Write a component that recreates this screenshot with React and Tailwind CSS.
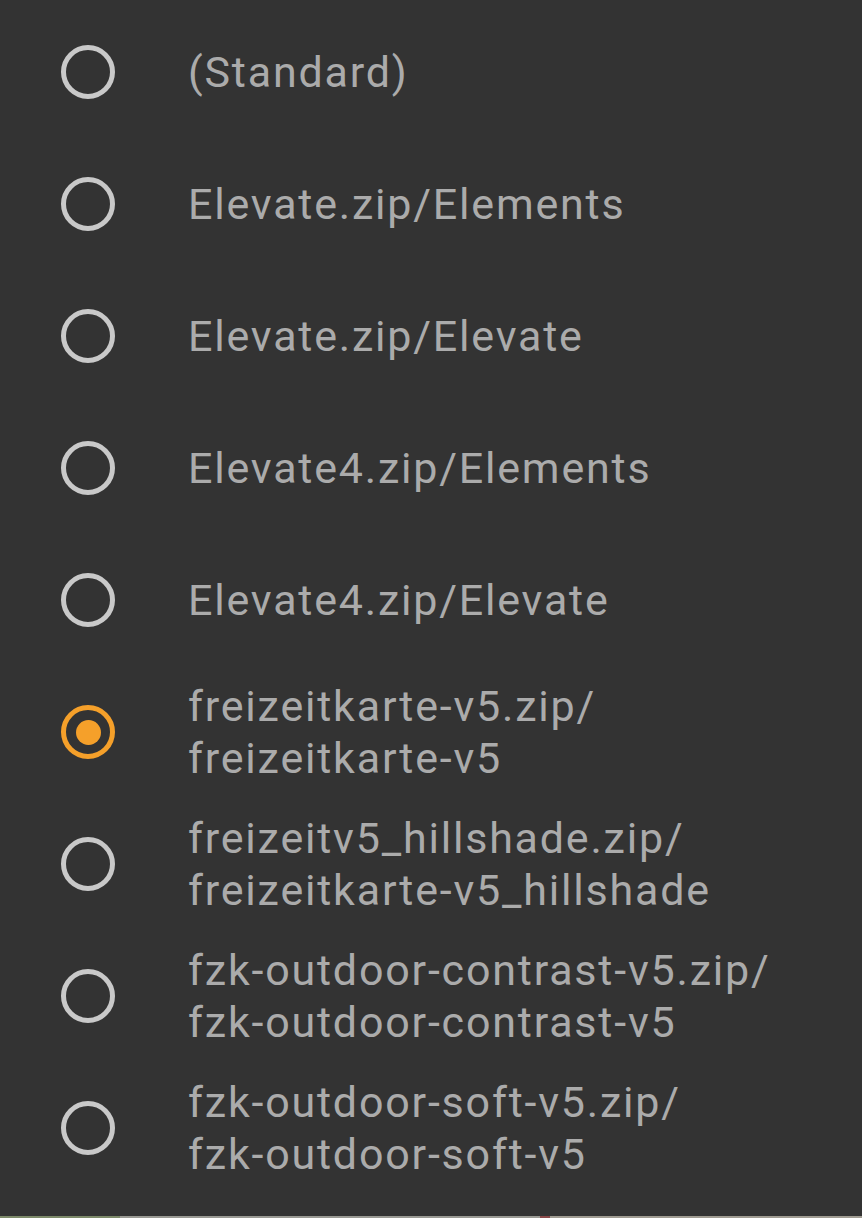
import React from "react";

// Map theme options shown in the picker
const options = [
  ["(Standard)"],
  ["Elevate.zip/Elements"],
  ["Elevate.zip/Elevate"],
  ["Elevate4.zip/Elements"],
  ["Elevate4.zip/Elevate"],
  ["freizeitkarte-v5.zip/", "freizeitkarte-v5"],
  ["freizeitv5_hillshade.zip/", "freizeitkarte-v5_hillshade"],
  ["fzk-outdoor-contrast-v5.zip/", "fzk-outdoor-contrast-v5"],
  ["fzk-outdoor-soft-v5.zip/", "fzk-outdoor-soft-v5"],
];

const selected = 5;

const Radio = ({ checked }) => {
  if (checked) {
    return (
      <div className="flex h-[54px] w-[54px] shrink-0 items-center justify-center rounded-full border-[5px] border-[#f5a02a]">
        <div className="h-[25px] w-[25px] rounded-full bg-[#f5a02a]" />
      </div>
    );
  }
  return <div className="h-[54px] w-[54px] shrink-0 rounded-full border-[5px] border-[#c9c9c9]" />;
};

export default function App() {
  return (
    <div className="flex h-[1218px] w-[862px] flex-col bg-[#333333] font-['Roboto','Liberation_Sans',sans-serif]">
      <div className="flex flex-1 flex-col pt-[6px]">
        {options.map((lines, i) => (
          <div key={i} className="flex h-[132px] items-center pl-[61px]">
            <Radio checked={i === selected} />
            <div className="ml-[73px] text-[43px] leading-[52px] tracking-[1.8px] text-[#ababab]">
              {lines.map((l, j) => (
                <div key={j}>{l}</div>
              ))}
            </div>
          </div>
        ))}
      </div>
      <div className="flex h-[2px]">
        <div className="w-[120px] bg-[#7d8a6a]" />
        <div className="w-[420px] bg-[#9a9a94]" />
        <div className="w-[10px] bg-[#8a4a4a]" />
        <div className="flex-1 bg-[#a09c92]" />
      </div>
    </div>
  );
}
